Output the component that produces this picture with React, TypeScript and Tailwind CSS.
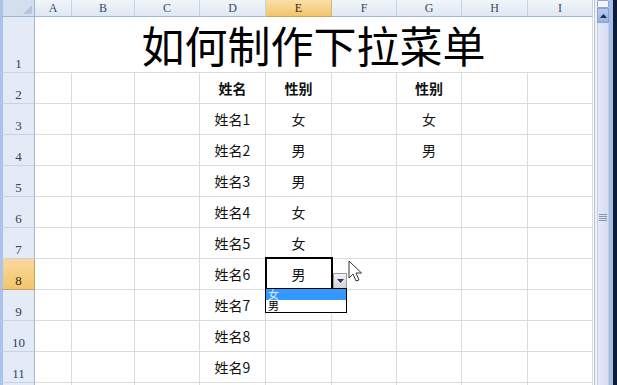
import React from 'react';

const cols = ['A', 'B', 'C', 'D', 'E', 'F', 'G', 'H', 'I'];

// data rows 2..12, each row: values by column letter
const rows: Record<number, Record<string, { t: string; b?: boolean }>> = {
  2: { D: { t: '姓名', b: true }, E: { t: '性别', b: true }, G: { t: '性别', b: true } },
  3: { D: { t: '姓名1' }, E: { t: '女' }, G: { t: '女' } },
  4: { D: { t: '姓名2' }, E: { t: '男' }, G: { t: '男' } },
  5: { D: { t: '姓名3' }, E: { t: '男' } },
  6: { D: { t: '姓名4' }, E: { t: '女' } },
  7: { D: { t: '姓名5' }, E: { t: '女' } },
  8: { D: { t: '姓名6' }, E: { t: '男' } },
  9: { D: { t: '姓名7' } },
  10: { D: { t: '姓名8' } },
  11: { D: { t: '姓名9' } },
  12: {},
};

function RowHead({ n, tall }: { n: number; tall?: boolean }) {
  const active = n === 8;
  return (
    <div
      className={`flex items-end justify-center border-b border-r text-[13px] leading-none ${tall ? 'h-[56px]' : 'h-[31px]'} ${
        active
          ? 'bg-gradient-to-b from-[#f9d99c] to-[#f3c56c] border-b-[#c9a35a] border-r-[#c9a35a] text-[#3a2a10]'
          : 'bg-[#e4ebf6] border-b-[#c5d3e6] border-r-[#9eb6ce] text-[#33405a]'
      } border-l-[3px] border-l-[#a9c3ea]`}
      style={{ fontFamily: '"Liberation Serif", serif' }}
    >
      {n < 12 && <span className="mb-[2px]">{n}</span>}
    </div>
  );
}

function Cell({ r, c }: { r: number; c: string }) {
  const v = rows[r]?.[c];
  const selected = r === 8 && c === 'E';
  return (
    <div className="relative h-[31px] border-b border-r border-[#dadcdd] flex items-center justify-center text-[14px] text-[#111]">
      {v && <span className={v.b ? 'font-bold' : ''}>{v.t}</span>}
      {selected && (
        <>
          <div className="absolute -left-px -top-[2px] w-[68px] h-[33px] border-2 border-black" />
          {/* dropdown button */}
          <div className="absolute left-[67px] top-[14px] w-[14px] h-[16px] bg-gradient-to-b from-[#f4f4f4] to-[#d4d4d4] border border-[#9a9a9a] flex items-center justify-center z-10">
            <svg width="7" height="4" viewBox="0 0 7 4">
              <path d="M0 0h7L3.5 4z" fill="#2a3a5a" />
            </svg>
          </div>
          {/* dropdown list */}
          <div className="absolute left-[-1px] top-[29px] w-[82px] h-[25px] bg-white border border-black z-20 flex flex-col text-[11px] leading-none">
            <div className="h-[11px] bg-[#3399ff] text-[#dbeaff] pl-[2px] flex items-center overflow-hidden">女</div>
            <div className="h-[11px] text-black pl-[2px] flex items-center overflow-hidden">男</div>
          </div>
          {/* mouse cursor */}
          <svg className="absolute left-[82px] top-[1px] z-30" width="14" height="22" viewBox="0 0 14 22">
            <path d="M1 1v17l4-4 3 7 3-1-3-7h5.5z" fill="#fff" stroke="#333" strokeWidth="1" strokeLinejoin="round" />
          </svg>
        </>
      )}
    </div>
  );
}

export default function App() {
  return (
    <div
      className="w-[617px] h-[385px] overflow-hidden bg-white flex"
      style={{ fontFamily: '"Noto Sans CJK SC", "Noto Sans", sans-serif' }}
    >
      <div className="w-[594px] h-full overflow-hidden relative">
        <div className="grid grid-cols-[35px_37px_63px_65px_66px_66px_65px_65px_66px_65px]">
          {/* column header row */}
          <div className="h-[17px] bg-[#d3dfee] border-b border-r border-[#9eb6ce] border-l-[3px] border-l-[#a9c3ea] flex items-end justify-end p-[2px]">
            <svg width="9" height="9" viewBox="0 0 9 9">
              <path d="M9 0v9H0z" fill="#b3c5df" />
            </svg>
          </div>
          {cols.map((c) => (
            <div
              key={c}
              className={`h-[17px] border-b border-r flex items-center justify-center text-[12px] leading-none ${
                c === 'E'
                  ? 'bg-gradient-to-b from-[#fbe0a8] to-[#f3c46a] border-b-[#c9a35a] border-r-[#d8b57a] text-[#3a2a10]'
                  : 'bg-gradient-to-b from-[#f2f6fb] to-[#dfe7f2] border-b-[#9eb6ce] border-r-[#c5d3e6] text-[#3a4a64]'
              }`}
              style={{ fontFamily: '"Liberation Serif", serif' }}
            >
              {c}
            </div>
          ))}

          {/* row 1: merged title */}
          <RowHead n={1} tall />
          <div className="col-span-9 h-[56px] border-b border-r border-[#dadcdd] flex items-center justify-center">
            <span className="text-[43px] leading-none text-black">如何制作下拉菜单</span>
          </div>

          {Object.keys(rows).map((k) => {
            const r = Number(k);
            return (
              <React.Fragment key={r}>
                <RowHead n={r} />
                {cols.map((c) => (
                  <Cell key={c} r={r} c={c} />
                ))}
              </React.Fragment>
            );
          })}
        </div>
      </div>

      {/* vertical scrollbar */}
      <div className="flex h-full">
        <div className="w-[1px] bg-[#b9c2cf]" />
        <div className="w-[2px] bg-[#eef1f7]" />
        <div className="w-[12px] flex flex-col">
          <div className="h-[8px] bg-[#f2f5fb] border border-[#8fa6c8] rounded-[1px]" />
          <div className="h-[15px] bg-gradient-to-b from-[#b8cbee] to-[#98b2e0] border border-[#8aa2cc] flex items-center justify-center">
            <svg width="7" height="4" viewBox="0 0 7 4">
              <path d="M0 4h7L3.5 0z" fill="#1f2f55" />
            </svg>
          </div>
          <div className="flex-1 bg-gradient-to-r from-[#e6e9f8] to-[#d6dcf2] border-x border-[#c4cce4] flex flex-col items-center pt-[191px]">
            <div className="w-[8px] flex flex-col gap-[1px]">
              <div className="h-px bg-[#8a94aa]" />
              <div className="h-px bg-[#8a94aa]" />
              <div className="h-px bg-[#8a94aa]" />
              <div className="h-px bg-[#8a94aa]" />
            </div>
          </div>
        </div>
        <div className="w-[4px] bg-[#a6bde8]" />
        <div className="w-[4px] bg-[#0f1a38]" />
      </div>
    </div>
  );
}
